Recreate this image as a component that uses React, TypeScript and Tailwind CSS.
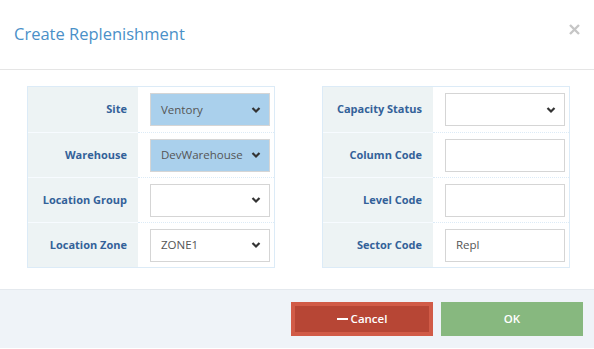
import React from 'react';

type Field = { label: string; kind: 'select' | 'input'; value: string; highlight?: boolean };

const leftFields: Field[] = [
  { label: 'Site', kind: 'select', value: 'Ventory', highlight: true },
  { label: 'Warehouse', kind: 'select', value: 'DevWarehouse', highlight: true },
  { label: 'Location Group', kind: 'select', value: '' },
  { label: 'Location Zone', kind: 'select', value: 'ZONE1' },
];

const rightFields: Field[] = [
  { label: 'Capacity Status', kind: 'select', value: '' },
  { label: 'Column Code', kind: 'input', value: '' },
  { label: 'Level Code', kind: 'input', value: '' },
  { label: 'Sector Code', kind: 'input', value: 'Repl' },
];

const Chevron = () => (
  <svg width="10" height="7" viewBox="0 0 10 7" className="pointer-events-none absolute right-[8px] top-1/2 -translate-y-1/2">
    <polyline points="1.5,1.5 5,5 8.5,1.5" fill="none" stroke="#333" strokeWidth="2.2" />
  </svg>
);

const Control = ({ field }: { field: Field }) => {
  const bg = field.highlight ? 'bg-[#aad0ec]' : 'bg-white';
  return (
    <div className={`relative h-[33px] w-[120px] border border-[#d5d5d5] ${bg}`}>
      <div className="flex h-full items-center overflow-hidden whitespace-nowrap pl-[10px] pr-[22px] text-[11.5px] text-[#555]">
        {field.value}
      </div>
      {field.kind === 'select' && <Chevron />}
    </div>
  );
};

const InfoTable = ({ fields }: { fields: Field[] }) => (
  <div className="w-[248px] border border-[#dcebf7]">
    {fields.map((f, i) => (
      <div key={f.label} className="flex h-[45px]">
        <div
          className={`flex w-[110px] items-center justify-end bg-[#edf3f4] pr-[11px] text-[11px] font-bold text-[#336199] ${
            i > 0 ? 'border-t border-[#f7fbff]' : ''
          }`}
        >
          {f.label}
        </div>
        <div
          className={`flex flex-1 items-center pl-[12px] ${i > 0 ? 'border-t border-dotted border-[#dcebf7]' : ''}`}
        >
          <Control field={f} />
        </div>
      </div>
    ))}
  </div>
);

export default function App() {
  return (
    <div className="h-[349px] w-[594px] bg-white" style={{ fontFamily: '"Open Sans", "Liberation Sans", sans-serif' }}>
      {/* Header */}
      <div className="flex h-[70px] items-center justify-between border-b border-[#e5e5e5] pl-[14px] pr-[14px]">
        <h3 className="text-[16.5px] font-normal text-[#4a90c8]">Create Replenishment</h3>
        <svg width="11" height="11" viewBox="0 0 11 11" className="-mt-[10px]">
          <path d="M1 1 L10 10 M10 1 L1 10" stroke="#c6c6c6" strokeWidth="2.4" />
        </svg>
      </div>

      {/* Body */}
      <div className="flex gap-[47px] pb-[21px] pl-[27px] pt-[16px]">
        <InfoTable fields={leftFields} />
        <InfoTable fields={rightFields} />
      </div>

      {/* Footer */}
      <div className="flex justify-end gap-[8px] border-t border-[#e4e9ee] bg-[#eff3f8] pb-[12px] pr-[11px] pt-[12px]">
        <button className="flex h-[34px] w-[142px] items-center justify-center gap-[3px] border-4 border-[#d15b47] bg-[#b74635] text-[11.5px] font-semibold text-white">
          <span className="inline-block h-[2.5px] w-[11px] bg-white" />
          Cancel
        </button>
        <button className="flex h-[34px] w-[142px] items-center justify-center bg-[#87b87f] text-[11.5px] font-semibold text-white">
          OK
        </button>
      </div>
    </div>
  );
}
